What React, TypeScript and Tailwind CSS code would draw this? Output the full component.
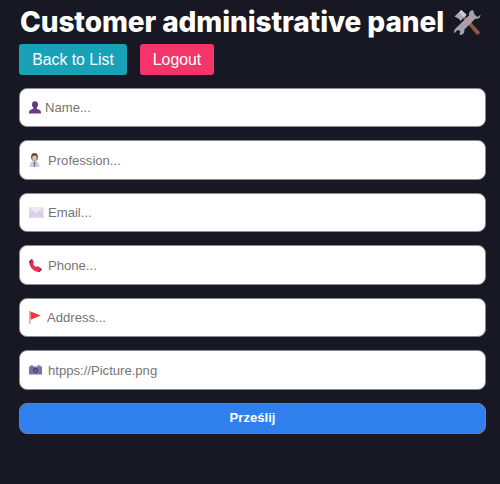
import React from "react";

const Person = () => (
  <svg width="12" height="13" viewBox="0 0 12 13" className="shrink-0">
    <ellipse cx="6" cy="3.6" rx="3" ry="3.4" fill="#5f3a78" />
    <path d="M4.5 6h3l.3 1.700 3 1.300c.8.4 1.200 1.300 1.200 3.500H0c0-2.200.4-3.100 1.200-3.500l3-1.300z" fill="#6a3d86" />
  </svg>
);

const Worker = () => (
  <svg width="11" height="14" viewBox="0 0 11 14" className="shrink-0">
    <path d="M.5 14c0-3.500 1-5 3-5.500h4c2 .5 3 2 3 5.500z" fill="#c9d2dc" />
    <path d="M4.500 8.500h2L6 14H5z" fill="#7a6aa8" />
    <ellipse cx="5.500" cy="4" rx="3.400" ry="3.900" fill="#5c4a48" />
    <ellipse cx="5.500" cy="5" rx="2.300" ry="2.600" fill="#e8bfa8" />
    <rect x="4.500" y="7" width="2" height="2" fill="#dcae98" />
  </svg>
);

const Mail = () => (
  <svg width="14.500" height="11" viewBox="0 0 15 11" className="shrink-0">
    <rect width="15" height="11" fill="#dcd3e8" />
    <path d="M0 0l7.500 6L15 0z" fill="#efeaf5" />
    <path d="M0 11l5.500-6.200M15 11L9.500 4.800" stroke="#c6bbd8" strokeWidth=".8" />
  </svg>
);

const Phone = () => (
  <svg width="13" height="13" viewBox="0 0 13 13" className="shrink-0">
    <path d="M0 2.400 2.800 0l2.300 3.600-1.100 1.100c.6 1.500 1.700 2.700 3.300 3.400l1.200-1.100L13 9.800 10.400 13C4.800 12.800.2 8 0 2.400z" fill="#f02a4c" />
    <path d="M0 2.400 2.800 0l1 1.600L1.300 3.900zM9.200 12.700l2.300-3 1.500 1-2.400 2.300z" fill="#7a2a8c" />
  </svg>
);

const Flag = () => (
  <svg width="12" height="13" viewBox="0 0 12 13" className="shrink-0">
    <rect x="0" y="0" width="1.600" height="13" fill="#eca49a" />
    <path d="M1.600 .6 11.600 4.600 1.600 8.800z" fill="#f6303c" />
  </svg>
);

const Camera = () => (
  <svg width="13" height="10" viewBox="0 0 13 10" className="shrink-0">
    <rect x="8.500" y="0" width="3" height="2" fill="#a8a2bc" />
    <rect x="1.500" y=".5" width="2.500" height="1.500" fill="#5c5578" />
    <rect x="0" y="1.500" width="13" height="8" rx=".6" fill="#7a6fa6" />
    <circle cx="6.500" cy="5.400" r="2.300" fill="#3a3652" />
    <circle cx="6.500" cy="5.400" r="1" fill="#9c96b8" />
  </svg>
);

const Tools = () => (
  <svg width="28" height="27" viewBox="0 0 27 27" className="shrink-0">
    <path d="M9.500 9.500 12 7.300l13.600 15c.8.900.8 2-.1 2.800-.9.800-2 .7-2.800-.2z" fill="#8c5a44" />
    <path d="M1 7.500 7.800 1l5.200 4.800-6 6.200-1.600-2.200z" fill="#aeaab4" />
    <path d="M7.800 1 13 5.800l-2.500 2.600L5.500 3.500z" fill="#cfccd2" />
    <path d="M19.500 1c-2.800.2-4.500 2.600-3.800 5.200L2 19.500c-1.500 1.500-1.800 3.300-1.200 4.700L4 21l2.800 1-.8 3.800c1.700.4 3.400-.4 4.300-1.800.7-1.100.7-2.300.4-3.300L22 9.600c2.700.9 5-1 5-3.800l-3 2.200-3-2.600z" fill="#a5a1ab" />
  </svg>
);

const fields = [
  { icon: <Person />, ph: "Name...", gap: "gap-[4px]" },
  { icon: <Worker />, ph: "Profession...", gap: "gap-[8px]" },
  { icon: <Mail />, ph: "Email...", gap: "gap-[4.500px]" },
  { icon: <Phone />, ph: "Phone...", gap: "gap-[6px]" },
  { icon: <Flag />, ph: "Address...", gap: "gap-[6px]" },
  { icon: <Camera />, ph: "htpps://Picture.png", gap: "gap-[6px]" },
];

export default function App() {
  return (
    <div className="h-[484px] w-[500px] bg-[#181824] px-[19px] pt-[5px] font-['Liberation_Sans',Arial,sans-serif]">
      <h1 className="flex h-[34px] items-center gap-[9px] pl-px font-['Inter',sans-serif] text-[28px] font-extrabold leading-none tracking-[-0.1px] whitespace-nowrap text-white">
        Customer administrative panel
        <Tools />
      </h1>
      <div className="mt-[5px] flex gap-[13px]">
        <button className="h-[31px] w-[108px] rounded-[3px] bg-[#17a2b8] text-[15.800px] text-white">Back to List</button>
        <button className="h-[31px] w-[74px] rounded-[3px] bg-[#f33569] text-[15.800px] text-white">Logout</button>
      </div>
      <form className="mt-[12.800px] flex w-[467px] flex-col gap-[13px]">
        {fields.map((f) => (
          <label
            key={f.ph}
            className={`flex h-[39.500px] items-center rounded-lg border border-[#8a8a92] bg-white pl-[9px] ${f.gap}`}
          >
            {f.icon}
            <input
              placeholder={f.ph}
              className="min-w-0 flex-1 bg-transparent pt-px text-[13.100px] outline-none placeholder:text-[#757575]"
            />
          </label>
        ))}
        <button
          type="button"
          className="h-[31px] rounded-lg border border-[#6f7f9c] bg-[#2f80ed] text-[13.100px] font-bold text-white"
        >
          Prześlij
        </button>
      </form>
    </div>
  );
}
